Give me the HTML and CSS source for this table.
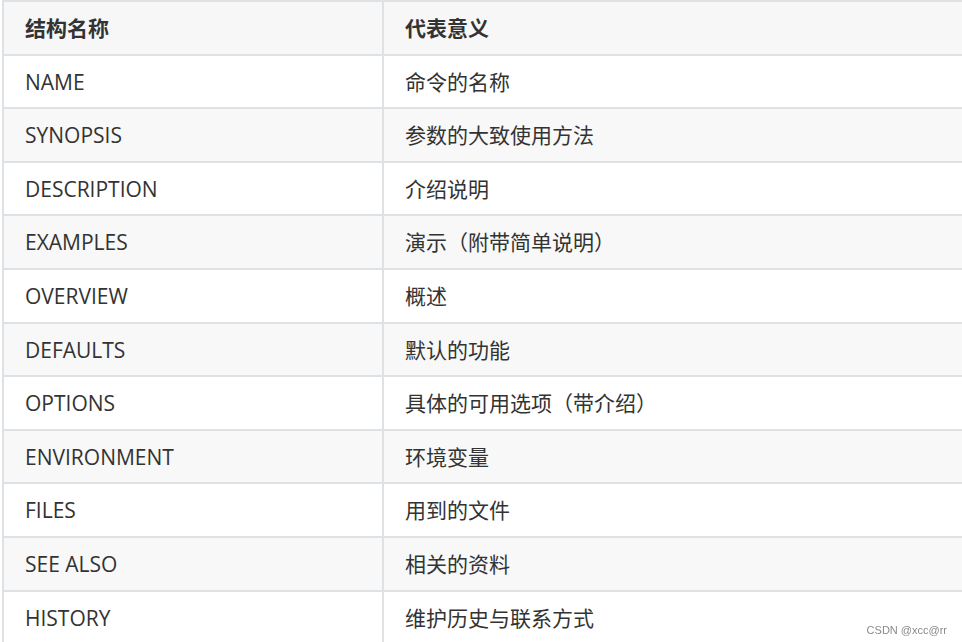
FILE: index.html
```html
<!DOCTYPE html>
<html lang="zh-CN">
<head>
<meta charset="utf-8">
<title>结构名称</title>
<link rel="stylesheet" href="styles.css">
</head>
<body>
<table class="man-table">
  <thead>
    <tr><th class="col-name">结构名称</th><th>代表意义</th></tr>
  </thead>
  <tbody>
    <tr><td>NAME</td><td>命令的名称</td></tr>
    <tr><td>SYNOPSIS</td><td>参数的大致使用方法</td></tr>
    <tr><td>DESCRIPTION</td><td>介绍说明</td></tr>
    <tr><td>EXAMPLES</td><td>演示（附带简单说明）</td></tr>
    <tr><td>OVERVIEW</td><td>概述</td></tr>
    <tr><td>DEFAULTS</td><td>默认的功能</td></tr>
    <tr><td>OPTIONS</td><td>具体的可用选项（带介绍）</td></tr>
    <tr><td>ENVIRONMENT</td><td>环境变量</td></tr>
    <tr><td>FILES</td><td>用到的文件</td></tr>
    <tr><td>SEE ALSO</td><td>相关的资料</td></tr>
    <tr><td>HISTORY</td><td>维护历史与联系方式</td></tr>
  </tbody>
</table>
<div class="watermark">CSDN @xcc@rr</div>
</body>
</html>
```
FILE: styles.css
```css
html, body {
  margin: 0;
  padding: 0;
  background: #ffffff;
  overflow: hidden;
  height: 642px;
}
body {
  font-family: "Open Sans", "Noto Sans CJK SC", sans-serif;
  color: #333333;
  font-size: 21px;
}
.man-table {
  border-collapse: separate;
  border-spacing: 0;
  margin-left: 2px;
  width: 1000px;
  table-layout: fixed;
}
.man-table th,
.man-table td {
  border-top: 2px solid #dfe2e5;
  border-left: 2px solid #dfe2e5;
  padding: 13px 21px 11px 21px;
  line-height: 27.6px;
  text-align: left;
  vertical-align: middle;
}
.man-table th {
  font-weight: 700;
  background: #f7f7f7;
}
.man-table .col-name {
  width: 336px;
}
.man-table tbody tr:nth-child(even) td {
  background: #f8f8f8;
}
.watermark {
  position: fixed;
  right: 15px;
  bottom: 6px;
  font-family: "Liberation Sans", Arial, sans-serif;
  font-size: 11px;
  color: #8a8a8a;
}
```
